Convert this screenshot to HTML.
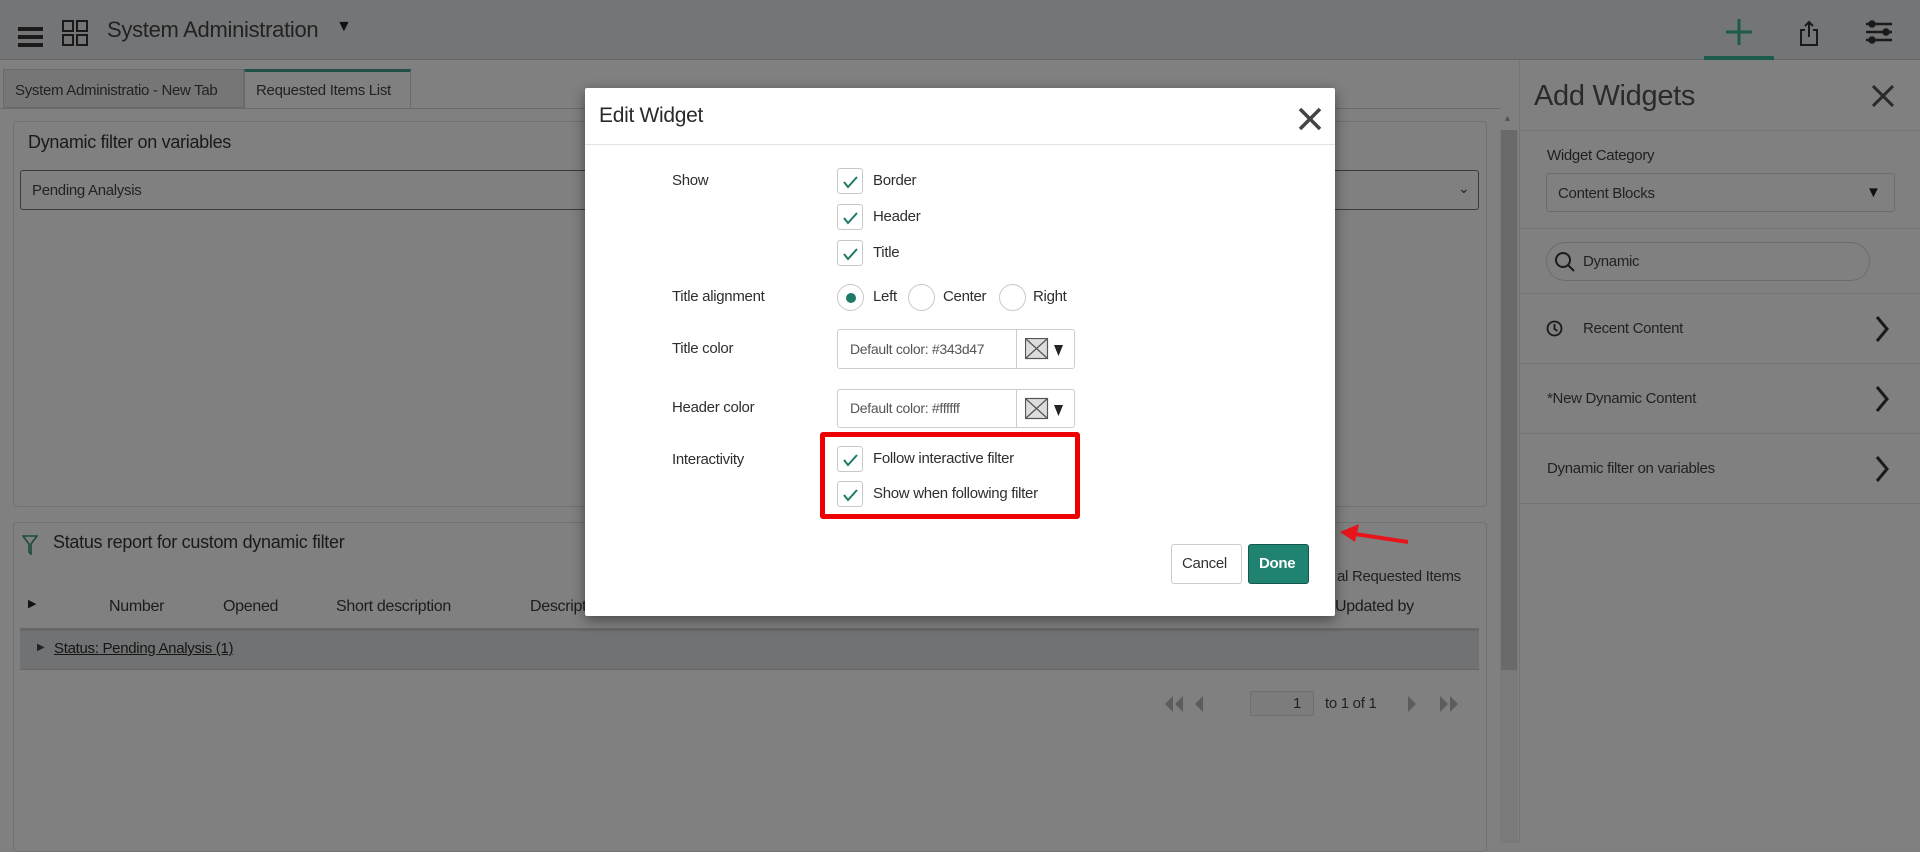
<!DOCTYPE html>
<html><head><meta charset="utf-8"><style>
*{box-sizing:border-box;margin:0;padding:0}
body{width:1920px;height:843px;overflow:hidden;position:relative;background:#808080;font-family:"Liberation Sans",sans-serif;color:#1c1c1c;font-size:15px;letter-spacing:-0.3px}
.a{position:absolute}
.hdr{left:0;top:0;width:1920px;height:60px;background:#747577;border-bottom:1px solid #666}
.t{white-space:nowrap}
.dlg{left:585px;top:88px;width:750px;height:528px;background:#fff;box-shadow:0 4px 14px rgba(0,0,0,.45);border-radius:2px;color:#2e2e2e}
.cb{width:26px;height:26px;border:1px solid #c8c8c8;border-radius:3px;background:#fff}
.rd{width:27px;height:27px;border:1px solid #c8c8c8;border-radius:50%;background:#fff}
</style></head><body>
<div class="a hdr"></div>
<div class="a" style="left:18px;top:27px;width:25px;height:4px;background:#1a1a1a"></div>
<div class="a" style="left:18px;top:35px;width:25px;height:4px;background:#1a1a1a"></div>
<div class="a" style="left:18px;top:43px;width:25px;height:4px;background:#1a1a1a"></div>
<svg class="a" style="left:62px;top:20px" width="26" height="26" viewBox="0 0 26 26" fill="none" stroke="#1a1a1a" stroke-width="2"><rect x="1" y="1" width="10" height="10"/><rect x="15" y="1" width="10" height="10"/><rect x="1" y="15" width="10" height="10"/><rect x="15" y="15" width="10" height="10"/></svg>
<div class="a t" style="left:107px;top:17px;font-size:22px;color:#222">System Administration</div>
<div class="a t" style="left:336px;top:18px;font-size:16px;color:#111">▼</div>
<svg class="a" style="left:1725px;top:18px" width="28" height="28" viewBox="0 0 28 28" stroke="#1c5a4c" stroke-width="3"><line x1="14" y1="1" x2="14" y2="27"/><line x1="1" y1="14" x2="27" y2="14"/></svg>
<div class="a" style="left:1704px;top:56px;width:70px;height:4px;background:#1c5a4c"></div>
<svg class="a" style="left:1799px;top:20px" width="20" height="26" viewBox="0 0 20 26" fill="none" stroke="#1a1a1a" stroke-width="2"><path d="M6 10H2v15h16V10h-4"/><path d="M10 17V2M6 6l4-4 4 4"/></svg>
<svg class="a" style="left:1866px;top:20px" width="26" height="24" viewBox="0 0 26 24" stroke="#1a1a1a" stroke-width="2.5"><line x1="0" y1="4" x2="26" y2="4"/><line x1="0" y1="12" x2="26" y2="12"/><line x1="0" y1="20" x2="26" y2="20"/><circle cx="6" cy="4" r="2.5" fill="#1a1a1a"/><circle cx="20" cy="12" r="2.5" fill="#1a1a1a"/><circle cx="6" cy="20" r="2.5" fill="#1a1a1a"/></svg>
<div class="a" style="left:3px;top:69px;width:241px;height:39px;background:#767676;border:1px solid #6a6a6a"></div>
<div class="a t" style="left:15px;top:82px;color:#222">System Administratio - New Tab</div>
<div class="a" style="left:244px;top:69px;width:167px;height:40px;background:#808080;border:1px solid #6a6a6a;border-top:3px solid #1f4f45;border-bottom:none"></div>
<div class="a t" style="left:256px;top:82px;color:#222">Requested Items List</div>
<div class="a" style="left:0;top:108px;width:1500px;height:1px;background:#6a6a6a"></div>
<div class="a" style="left:13px;top:121px;width:1474px;height:386px;border:1px solid #717171;border-radius:4px"></div>
<div class="a t" style="left:28px;top:132px;font-size:18px;color:#1a1a1a">Dynamic filter on variables</div>
<div class="a" style="left:20px;top:170px;width:1459px;height:40px;border:1px solid #3a3a3a;border-radius:3px"></div>
<div class="a t" style="left:32px;top:182px;color:#222">Pending Analysis</div>
<div class="a t" style="left:1458px;top:180px;font-size:14px;color:#222">⌄</div>
<div class="a" style="left:13px;top:522px;width:1474px;height:330px;border:1px solid #717171;border-radius:4px"></div>
<svg class="a" style="left:22px;top:535px" width="16" height="20" viewBox="0 0 16 20" fill="none" stroke="#1d4a40" stroke-width="1.6"><path d="M1 1h14L9 9v10L7 17V9z"/></svg>
<div class="a t" style="left:53px;top:532px;font-size:18px;color:#1a1a1a">Status report for custom dynamic filter</div>
<div class="a t" style="left:1337px;top:568px;color:#222">al Requested Items</div>
<div class="a t" style="left:28px;top:597px;font-size:11px;color:#111">▶</div>
<div class="a t" style="left:109px;top:598px;font-size:16px">Number</div>
<div class="a t" style="left:223px;top:598px;font-size:16px">Opened</div>
<div class="a t" style="left:336px;top:598px;font-size:16px">Short description</div>
<div class="a t" style="left:530px;top:598px;font-size:16px">Description</div>
<div class="a t" style="left:1335px;top:598px;font-size:16px">Updated by</div>
<div class="a" style="left:20px;top:628px;width:1459px;height:42px;background:#717273;border-top:3px solid #676767;border-bottom:1px solid #666"></div>
<div class="a t" style="left:37px;top:642px;font-size:10px;color:#222">▶</div>
<div class="a t" style="left:54px;top:640px;font-size:15px;text-decoration:underline;color:#151515">Status: Pending Analysis (1)</div>
<svg class="a" style="left:1163px;top:694px" width="64" height="20" viewBox="0 0 64 20" fill="#5c5c5c"><path d="M10 2v16L2 10zM20 2v16L12 10zM40 2v16L32 10z"/></svg>
<div class="a" style="left:1250px;top:691px;width:64px;height:25px;border:1px solid #6e6e6e;background:#7c7c7c;border-radius:2px"></div>
<div class="a t" style="left:1293px;top:695px;color:#222">1</div>
<div class="a t" style="left:1325px;top:695px;color:#222">to 1 of 1</div>
<svg class="a" style="left:1406px;top:694px" width="64" height="20" viewBox="0 0 64 20" fill="#5c5c5c"><path d="M2 2v16l8-8zM34 2v16l8-8zM44 2v16l8-8z"/></svg>
<div class="a" style="left:1500px;top:130px;width:18px;height:713px;background:#7a7a7a"></div>
<div class="a" style="left:1501px;top:130px;width:16px;height:540px;background:#6a6a6a"></div>
<div class="a t" style="left:1503px;top:113px;font-size:9px;color:#555">▲</div>
<div class="a" style="left:1519px;top:60px;width:1px;height:783px;background:#747474"></div>
<div class="a t" style="left:1534px;top:80px;font-size:29px;color:#2a2a2a">Add Widgets</div>
<svg class="a" style="left:1872px;top:85px" width="22" height="22" viewBox="0 0 22 22" stroke="#2a2a2a" stroke-width="3"><line x1="1" y1="1" x2="21" y2="21"/><line x1="21" y1="1" x2="1" y2="21"/></svg>
<div class="a" style="left:1520px;top:130px;width:400px;height:1px;background:#747474"></div>
<div class="a t" style="left:1547px;top:147px;color:#1e1e1e">Widget Category</div>
<div class="a" style="left:1546px;top:173px;width:349px;height:39px;border:1px solid #6c6c6c;border-radius:3px"></div>
<div class="a t" style="left:1558px;top:185px;color:#222">Content Blocks</div>
<div class="a t" style="left:1866px;top:184px;font-size:15px;color:#111">▼</div>
<div class="a" style="left:1520px;top:228px;width:400px;height:1px;background:#747474"></div>
<div class="a" style="left:1546px;top:242px;width:324px;height:39px;border:1px solid #6c6c6c;border-radius:20px"></div>
<svg class="a" style="left:1554px;top:251px" width="22" height="22" viewBox="0 0 22 22" fill="none" stroke="#1a1a1a" stroke-width="2"><circle cx="9" cy="9" r="7"/><line x1="14" y1="14" x2="20" y2="20"/></svg>
<div class="a t" style="left:1583px;top:253px;color:#222">Dynamic</div>
<div class="a" style="left:1520px;top:293px;width:400px;height:1px;background:#747474"></div>
<svg class="a" style="left:1546px;top:320px" width="17" height="17" viewBox="0 0 17 17" fill="none" stroke="#1a1a1a" stroke-width="1.8"><circle cx="8.5" cy="8.5" r="7"/><path d="M8.5 4v5l3 2"/></svg>
<div class="a t" style="left:1583px;top:320px;color:#222">Recent Content</div>
<div class="a" style="left:1520px;top:363px;width:400px;height:1px;background:#747474"></div>
<div class="a t" style="left:1547px;top:390px;color:#222">*New Dynamic Content</div>
<div class="a" style="left:1520px;top:433px;width:400px;height:1px;background:#747474"></div>
<div class="a t" style="left:1547px;top:460px;color:#222">Dynamic filter on variables</div>
<div class="a" style="left:1520px;top:503px;width:400px;height:1px;background:#747474"></div>
<svg class="a" style="left:1874px;top:315px" width="16" height="190" viewBox="0 0 16 190" fill="none" stroke="#1a1a1a" stroke-width="3"><path d="M3 2l10 12L3 26M3 72l10 12L3 96M3 142l10 12L3 166"/></svg>
<svg class="a" style="left:1335px;top:522px" width="80" height="26" viewBox="0 0 80 26"><path d="M73 20L20 12" stroke="#e8141b" stroke-width="4"/><path d="M5 10L24 2L20 20z" fill="#e8141b"/></svg>
<div class="a dlg">
<div class="a t" style="left:14px;top:16px;font-size:21px;color:#2a2a2a">Edit Widget</div>
<svg class="a" style="left:713px;top:19px" width="24" height="24" viewBox="0 0 24 24" stroke="#444" stroke-width="3.5"><line x1="2" y1="2" x2="22" y2="22"/><line x1="22" y1="2" x2="2" y2="22"/></svg>
<div class="a" style="left:0;top:56px;width:750px;height:1px;background:#e2e2e2"></div>
<div class="a t" style="left:87px;top:84px">Show</div>
<div class="a t" style="left:87px;top:200px">Title alignment</div>
<div class="a t" style="left:87px;top:252px">Title color</div>
<div class="a t" style="left:87px;top:311px">Header color</div>
<div class="a t" style="left:87px;top:363px">Interactivity</div>
<div class="a cb" style="left:252px;top:80px"></div><div class="a t" style="left:288px;top:84px">Border</div>
<div class="a cb" style="left:252px;top:116px"></div><div class="a t" style="left:288px;top:120px">Header</div>
<div class="a cb" style="left:252px;top:152px"></div><div class="a t" style="left:288px;top:156px">Title</div>
<div class="a rd" style="left:252px;top:196px"><div class="a" style="left:8px;top:8px;width:10px;height:10px;border-radius:50%;background:#1e7a66"></div></div>
<div class="a t" style="left:288px;top:200px">Left</div>
<div class="a rd" style="left:323px;top:196px"></div><div class="a t" style="left:358px;top:200px">Center</div>
<div class="a rd" style="left:414px;top:196px"></div><div class="a t" style="left:448px;top:200px">Right</div>
<div class="a" style="left:252px;top:241px;width:238px;height:40px;border:1px solid #ccc;border-radius:3px"></div>
<div class="a" style="left:431px;top:241px;width:1px;height:40px;background:#ccc"></div>
<div class="a t" style="left:265px;top:253px;font-size:14px;color:#555">Default color: #343d47</div>
<div class="a" style="left:252px;top:301px;width:238px;height:39px;border:1px solid #ccc;border-radius:3px"></div>
<div class="a" style="left:431px;top:301px;width:1px;height:39px;background:#ccc"></div>
<div class="a t" style="left:265px;top:312px;font-size:14px;color:#555">Default color: #ffffff</div>
<svg class="a" style="left:440px;top:250px" width="46" height="82" viewBox="0 0 46 82" fill="none"><g stroke="#555" stroke-width="1.2"><rect x="0.5" y="0.5" width="22" height="20" fill="#ddd"/><path d="M1 1l21 19M22 1L1 20"/><rect x="0.5" y="60.5" width="22" height="20" fill="#ddd"/><path d="M1 61l21 19M22 61L1 80"/></g><path d="M29 7h9l-4.5 11zM29 67h9l-4.5 11z" fill="#222"/></svg>
<div class="a" style="left:235px;top:344px;width:260px;height:87px;border:5px solid #ee0000;border-radius:3px"></div>
<div class="a cb" style="left:252px;top:358px"></div><div class="a t" style="left:288px;top:362px">Follow interactive filter</div>
<div class="a cb" style="left:252px;top:393px"></div><div class="a t" style="left:288px;top:397px">Show when following filter</div>
<svg class="a" style="left:252px;top:80px" width="26" height="340" viewBox="0 0 26 340" fill="none" stroke="#1e7a66" stroke-width="2"><path d="M7 14l4 5 9-10M7 50l4 5 9-10M7 86l4 5 9-10M7 292l4 5 9-10M7 327l4 5 9-10"/></svg>
<div class="a" style="left:586px;top:456px;width:71px;height:40px;border:1px solid #ccc;border-radius:3px;background:#fff"></div>
<div class="a t" style="left:597px;top:467px;color:#333">Cancel</div>
<div class="a" style="left:663px;top:456px;width:61px;height:40px;border:1px solid #14594b;border-radius:3px;background:#208372"></div>
<div class="a t" style="left:674px;top:467px;color:#fff;font-weight:bold">Done</div>
</div>
</body></html>
